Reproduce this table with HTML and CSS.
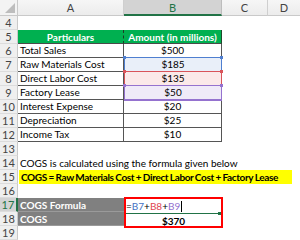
FILE: index.html
```html
<!DOCTYPE html>
<html>
<head>
	<title>COGS Calculation</title>
	<link rel="stylesheet" href="styles.css">
</head>
<body>
	<div class="sheet">
		<div class="corner"><span class="tri"></span></div>
		<div class="colhead">A</div>
		<div class="colhead sel">B</div>
		<div class="colhead">C</div>
		<div class="colhead last">D</div>

		<div class="rowhead">4</div>
		<div class="cell wide-a"></div>

		<div class="rowhead">5</div>
		<div class="cell th th-a">Particulars</div>
		<div class="cell th">Amount (in millions)</div>
		<div class="cell wide-c"></div>

		<div class="rowhead">6</div>
		<div class="cell td">Total Sales</div>
		<div class="cell td num">$500</div>
		<div class="cell wide-c"></div>

		<div class="rowhead">7</div>
		<div class="cell td">Raw Materials Cost</div>
		<div class="cell td num ref ref-blue">$185</div>
		<div class="cell wide-c"></div>

		<div class="rowhead">8</div>
		<div class="cell td">Direct Labor Cost</div>
		<div class="cell td num ref ref-red">$135</div>
		<div class="cell wide-c"></div>

		<div class="rowhead">9</div>
		<div class="cell td">Factory Lease</div>
		<div class="cell td num ref ref-purple">$50</div>
		<div class="cell wide-c"></div>

		<div class="rowhead">10</div>
		<div class="cell td">Interest Expense</div>
		<div class="cell td num">$20</div>
		<div class="cell wide-c"></div>

		<div class="rowhead">11</div>
		<div class="cell td">Depreciation</div>
		<div class="cell td num">$25</div>
		<div class="cell wide-c"></div>

		<div class="rowhead">12</div>
		<div class="cell td">Income Tax</div>
		<div class="cell td num">$10</div>
		<div class="cell wide-c"></div>

		<div class="rowhead">13</div>
		<div class="cell wide-a"></div>

		<div class="rowhead">14</div>
		<div class="cell wide-a note">COGS is calculated using the formula given below</div>

		<div class="rowhead">15</div>
		<div class="cell wide-a"><div class="hilite">COGS = Raw Materials Cost + Direct Labor Cost + Factory Lease</div></div>

		<div class="rowhead">16</div>
		<div class="cell wide-a"></div>

		<div class="rowhead sel">17</div>
		<div class="cell label">COGS Formula</div>
		<div class="result-box">
			<div class="formula">=<span class="r-blue">B7</span>+<span class="r-red">B8</span>+<span class="r-purple">B9</span><span class="caret"></span></div>
			<div class="total">$370</div>
		</div>
		<div class="cell wide-c"></div>

		<div class="rowhead">18</div>
		<div class="cell label">COGS</div>
		<div class="cell wide-c"></div>

		<div class="rowhead">19</div>
		<div class="cell wide-a"></div>
	</div>
</body>
</html>
```

FILE: styles.css
```css
body {
	margin: 0;
	background: #fff;
	font-family: 'Lato', 'Liberation Sans', sans-serif;
	font-size: 10px;
	color: #000;
}
.sheet {
	display: grid;
	grid-template-columns: 18px 106px 98px 46px 32px;
	grid-template-rows: 16px;
	grid-auto-rows: 14px;
	width: 300px;
	overflow: hidden;
}
.corner {
	position: relative;
	background: #f3f3f3;
	border-right: 1px solid #c9c9c9;
	border-bottom: 1px solid #c9c9c9;
	box-sizing: border-box;
}
.corner .tri {
	position: absolute;
	right: 2px;
	bottom: 2px;
	width: 0;
	height: 0;
	border-left: 10px solid transparent;
	border-bottom: 10px solid #bdbdbd;
}
.colhead {
	background: linear-gradient(#f6f6f6, #ececec);
	border-right: 1px solid #cfcfcf;
	border-bottom: 1px solid #c9c9c9;
	box-sizing: border-box;
	text-align: center;
	line-height: 16px;
	font-size: 11px;
	color: #444;
}
.colhead.sel {
	background: #d3d3d3;
	color: #217346;
	border-bottom: 2px solid #217346;
	border-right-color: #bdbdbd;
}
.colhead.last {
	border-right: none;
}
.rowhead {
	background: #efefef;
	border-right: 1px solid #c9c9c9;
	border-bottom: 1px solid #dcdcdc;
	box-sizing: border-box;
	text-align: center;
	line-height: 13px;
	font-size: 11px;
	color: #444;
}
.rowhead.sel {
	background: #d3d3d3;
	color: #217346;
	border-right: 2px solid #217346;
}
.cell {
	box-sizing: border-box;
	line-height: 14px;
	padding-left: 2px;
	white-space: nowrap;
}
.wide-a {
	grid-column: 2 / -1;
}
.wide-c {
	grid-column: 4 / -1;
}
.th {
	background: #00b050;
	color: #fff;
	font-weight: bold;
	text-align: center;
	padding-left: 0;
	border-bottom: 1px solid #4a4a4a;
	border-right: 1px solid #1d4a2b;
}
.th-a {
	border-right: 1px dashed #1d3b26;
}
.td {
	border-bottom: 1px solid #555;
	border-right: 1px solid #555;
	line-height: 13px;
}
.num {
	text-align: center;
	padding-left: 0;
}
.ref {
	position: relative;
	border: 1px solid;
	margin-top: -1px;
	height: 15px;
	line-height: 13px;
}
.ref::before,
.ref::after {
	content: "";
	position: absolute;
	top: -2px;
	width: 3px;
	height: 3px;
	background-color: currentColor;
}
.ref::before {
	left: -2px;
}
.ref::after {
	right: -2px;
}
.ref-blue {
	background: #e9eff9;
	border-color: #4f7fd0;
	color: #4f7fd0;
}
.ref-red {
	background: #fbe9e9;
	border-color: #d9545a;
	color: #d9545a;
}
.ref-purple {
	background: #efeaf8;
	border-color: #9572cf;
	color: #9572cf;
	box-shadow: 0 1px 0 #9572cf;
}
.ref-blue, .ref-red, .ref-purple {
	-webkit-text-fill-color: #000;
}
.note {
	padding-left: 2px;
}
.hilite {
	width: 273px;
	margin-left: -1px;
	padding-left: 2px;
	box-sizing: border-box;
	background: #ffff00;
	font-weight: bold;
	letter-spacing: -0.35px;
	word-spacing: -0.5px;
}
.label {
	background: #808080;
	color: #fff;
	font-weight: bold;
	border-bottom: 1px solid #9a9a9a;
}
.result-box {
	grid-row: span 2;
	margin: -1px -1px -2px 0;
	border: 2px solid #ff0000;
	display: flex;
	flex-direction: column;
}
.formula {
	height: 14px;
	line-height: 14px;
	padding-left: 0;
	border-bottom: 1px solid #217346;
	white-space: nowrap;
	position: relative;
}
.formula::after {
	content: "";
	position: absolute;
	right: 0;
	bottom: -2px;
	width: 3px;
	height: 3px;
	background: #217346;
}
.r-blue {
	color: #4472c4;
}
.r-red {
	color: #e0454f;
}
.r-purple {
	color: #9470cf;
}
.caret {
	display: inline-block;
	width: 1px;
	height: 11px;
	background: #000;
	vertical-align: -2px;
	margin-left: 1px;
}
.total {
	flex: 1;
	text-align: center;
	font-weight: bold;
	line-height: 14px;
}
```
